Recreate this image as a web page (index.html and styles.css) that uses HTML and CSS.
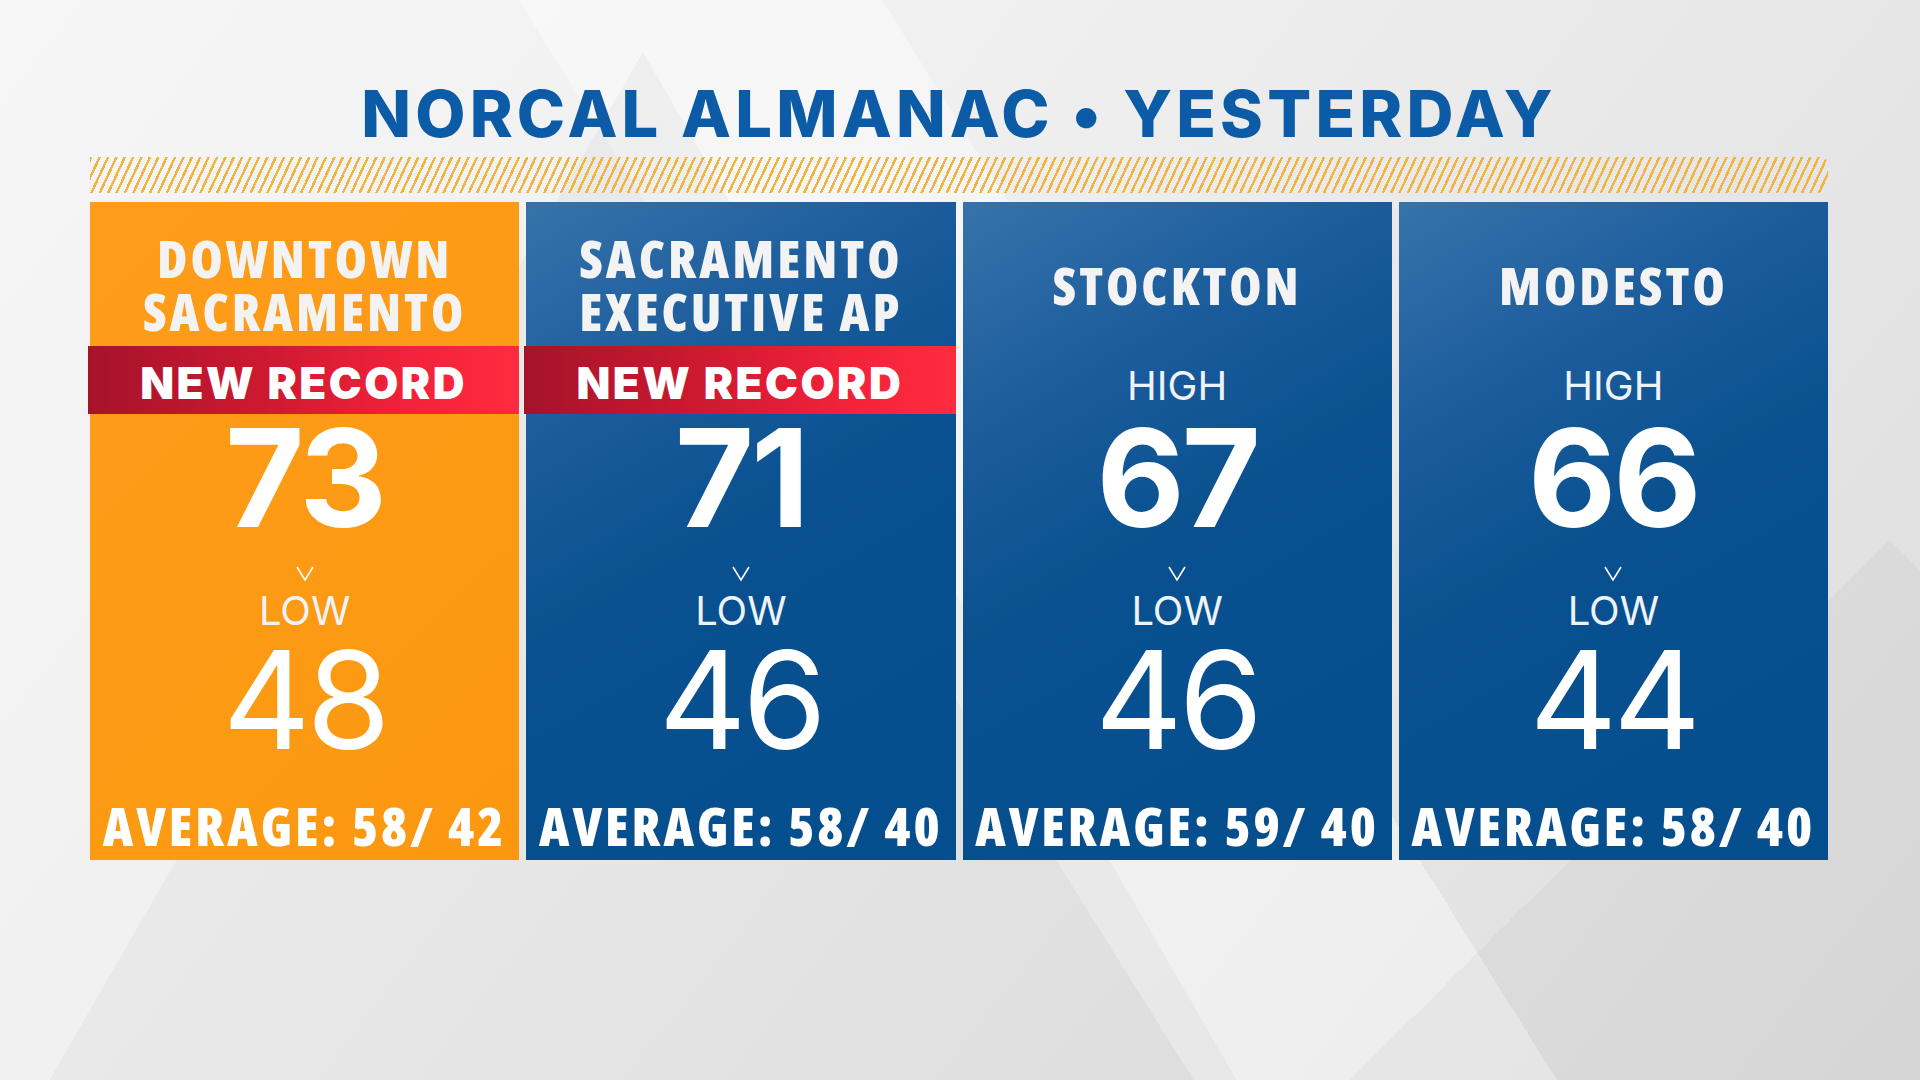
FILE: index.html
```html
<!DOCTYPE html>
<html lang="en">
<head>
<meta charset="utf-8">
<title>NorCal Almanac</title>
<link rel="stylesheet" href="styles.css">
</head>
<body>
<main class="board">
  <h1 class="title">NORCAL ALMANAC • YESTERDAY</h1>
  <div class="hatch"></div>
  <div class="cards">
    <section class="card card--orange">
      <div class="name">DOWNTOWN<br>SACRAMENTO</div>
      <div class="record">NEW RECORD</div>
      <div class="high">73</div>
      <svg class="chev" viewBox="0 0 18 15" width="18" height="15"><polyline points="1,1 9,14 17,1" fill="none" stroke="#fff" stroke-width="1.6"/></svg>
      <div class="label">LOW</div>
      <div class="low">48</div>
      <div class="avg">AVERAGE: 58/ 42</div>
    </section>
    <section class="card card--blue">
      <div class="name">SACRAMENTO<br>EXECUTIVE AP</div>
      <div class="record">NEW RECORD</div>
      <div class="high">71</div>
      <svg class="chev" viewBox="0 0 18 15" width="18" height="15"><polyline points="1,1 9,14 17,1" fill="none" stroke="#fff" stroke-width="1.6"/></svg>
      <div class="label">LOW</div>
      <div class="low">46</div>
      <div class="avg">AVERAGE: 58/ 40</div>
    </section>
    <section class="card card--blue">
      <div class="name">STOCKTON</div>
      <div class="label label--high">HIGH</div>
      <div class="high">67</div>
      <svg class="chev" viewBox="0 0 18 15" width="18" height="15"><polyline points="1,1 9,14 17,1" fill="none" stroke="#fff" stroke-width="1.6"/></svg>
      <div class="label">LOW</div>
      <div class="low">46</div>
      <div class="avg">AVERAGE: 59/ 40</div>
    </section>
    <section class="card card--blue">
      <div class="name">MODESTO</div>
      <div class="label label--high">HIGH</div>
      <div class="high">66</div>
      <svg class="chev" viewBox="0 0 18 15" width="18" height="15"><polyline points="1,1 9,14 17,1" fill="none" stroke="#fff" stroke-width="1.6"/></svg>
      <div class="label">LOW</div>
      <div class="low">44</div>
      <div class="avg">AVERAGE: 58/ 40</div>
    </section>
  </div>
</main>
</body>
</html>
```
FILE: styles.css
```css
html, body {
  margin: 0;
  padding: 0;
}
body {
  width: 1920px;
  height: 1080px;
  overflow: hidden;
  font-family: "Inter", "Noto Sans", sans-serif;
  background:
    conic-gradient(from 150deg at 643px 52px, rgba(110,110,110,0.06) 0deg 60deg, transparent 60deg 360deg),
    conic-gradient(from 135deg at 1890px 540px, rgba(90,90,90,0.05) 0deg 90deg, transparent 90deg 360deg),
    linear-gradient(58deg, transparent 0 46%, rgba(255,255,255,0.4) 46% 60%, transparent 60%),
    linear-gradient(128deg, #f6f6f6 0%, #f0f0f0 35%, #e6e6e6 70%, #dcdcdc 100%);
}
.board {
  padding: 81px 92px 0 90px;
}
.title {
  margin: 0;
  text-align: center;
  font-family: "Inter", sans-serif;
  font-weight: 800;
  font-size: 65px;
  line-height: 65px;
  letter-spacing: 4.2px;
  color: #0b5ba7;
}
.hatch {
  margin-top: 11px;
  height: 36px;
  border-radius: 0 8px 8px 0;
  background: repeating-linear-gradient(115deg, #f1b43c 0 2.4px, rgba(255,255,255,0) 2.4px 7.6px);
}
.cards {
  margin-top: 9px;
  display: grid;
  grid-template-columns: repeat(4, 1fr);
  gap: 7px;
}
.card {
  height: 658px;
  color: #fff;
  text-align: center;
}
.card--orange {
  background: linear-gradient(135deg, #fe9d1b 0%, #fb980f 100%);
}
.card--blue {
  background: linear-gradient(150deg, #3673ab 0%, #1a5b9b 28%, #08508f 52%, #054e8d 100%);
}
.name {
  height: 124px;
  padding-top: 20px;
  display: flex;
  align-items: center;
  justify-content: center;
  font-family: "Open Sans", "DejaVu Sans Condensed", sans-serif;
  font-stretch: 75%;
  font-weight: 800;
  font-size: 52px;
  line-height: 53px;
  letter-spacing: 3px;
  color: #f3f3f3;
}
.record {
  height: 62px;
  padding-top: 6px;
  margin-left: -2px;
  line-height: 62px;
  font-family: "Inter", sans-serif;
  font-weight: 900;
  font-size: 44px;
  letter-spacing: 2.5px;
  background: linear-gradient(90deg, #a5132b 0%, #cc1930 40%, #f3223a 75%, #ff2b3f 100%);
}
.label {
  font-weight: 400;
  font-size: 40px;
  line-height: 40px;
  color: #eef3f8;
}
.label--high {
  height: 56px;
  padding-top: 12px;
  line-height: 56px;
}
.high {
  font-weight: 700;
  font-size: 136px;
  line-height: 127px;
  letter-spacing: -3px;
}
.chev {
  display: block;
  margin: 25px auto 10px;
}
.low {
  font-weight: 400;
  font-size: 136px;
  line-height: 138px;
  letter-spacing: -4px;
}
.avg {
  margin-top: 28px;
  font-family: "Open Sans", "DejaVu Sans Condensed", sans-serif;
  font-stretch: 75%;
  font-weight: 800;
  font-size: 53px;
  line-height: 58px;
  letter-spacing: 3px;
  white-space: nowrap;
}
```
